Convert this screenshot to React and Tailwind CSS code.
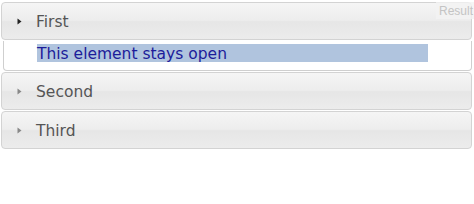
import React from "react";

function Tri({ dark }) {
  return (
    <svg width="5" height="7" viewBox="0 0 5 7" className="shrink-0">
      <path d="M0.5 0.5 L4.5 3.5 L0.5 6.5 Z" fill={dark ? "#222" : "#888"} />
    </svg>
  );
}

function Header({ label, dark, className = "" }) {
  return (
    <div className={"flex items-center h-[38px] w-[471px] rounded-[4px] border border-[#d3d3d3] bg-[linear-gradient(#f5f5f5,#ededed_48%,#e6e6e6_52%,#ececec)] text-[#555] pl-[15px] " + className}>
      <Tri dark={dark} />
      <span className="ml-[14px] text-[15.5px] leading-none pt-[3px]">{label}</span>
    </div>
  );
}

export default function App() {
  return (
    <div
      className="relative w-[474px] h-[204px] bg-white overflow-hidden pt-[2px] pl-[1px] flex flex-col"
      style={{ fontFamily: '"DejaVu Sans", Verdana, sans-serif' }}
    >
      <Header label="First" dark />
      <div className="mt-[1px] ml-[2px] w-[469px] h-[30px] border border-t-0 border-[#cfcfcf] rounded-b-[4px] bg-white pt-[3px] pl-[33px]">
        <div className="w-[391px] h-[18px] bg-[#b0c4de] text-[#1c1c9a] text-[15.5px] leading-[20px] whitespace-nowrap">
          This element stays open
        </div>
      </div>
      <Header label="Second" className="mt-[1px]" />
      <Header label="Third" className="mt-[1px]" />
      <div className="absolute top-[2px] right-[-4px] h-[17px] w-[42px] bg-[#f3f3f3]/80 text-[#c4c4c4] text-[12px] flex items-center pl-[3px]" style={{ fontFamily: '"Liberation Sans", Arial, sans-serif' }}>
        Result
      </div>
    </div>
  );
}
